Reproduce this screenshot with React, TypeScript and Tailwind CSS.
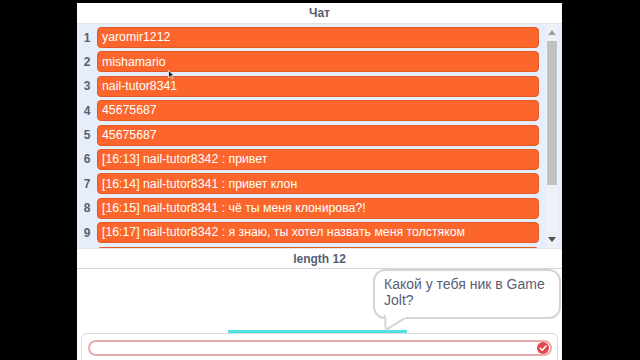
import React from 'react';

const items = [
  'yaromir1212',
  'mishamario',
  'nail-tutor8341',
  '45675687',
  '45675687',
  '[16:13] nail-tutor8342 : привет',
  '[16:14] nail-tutor8341 : привет клон',
  '[16:15] nail-tutor8341 : чё ты меня клонирова?!',
  '[16:17] nail-tutor8342 : я знаю, ты хотел назвать меня толстяком',
];

const ListRow: React.FC<{ index?: number; text?: string }> = ({ index, text }) => (
  <div className="flex items-center h-[21px] shrink-0">
    <div className="w-[20px] text-center text-[12px] font-bold text-[#575e75]">{index}</div>
    <div className="flex-1 h-full flex items-center bg-[#fc662c] rounded-[4px] border border-[#e25a25] px-[4px] text-[12.3px] text-white whitespace-nowrap overflow-hidden">
      {text}
    </div>
  </div>
);

export default function App() {
  return (
    <div
      className="w-[640px] h-[360px] bg-black pl-[77px] pt-[3px] overflow-hidden"
      style={{ fontFamily: '"Liberation Sans", Arial, sans-serif' }}
    >
      <div className="relative w-[485px] h-[357px] bg-white flex flex-col overflow-hidden">
        {/* list monitor */}
        <div className="shrink-0 flex flex-col h-[266px] border-b border-[#d3d6de]">
          <div className="h-[21px] shrink-0 flex items-center justify-center bg-white border-b border-[#dfe3ea] text-[12px] font-bold text-[#575e75]">
            Чат
          </div>
          <div className="flex-1 flex bg-[#e6eefb] overflow-hidden">
            <div className="flex-1 flex flex-col gap-[3.4px] pt-[3px] overflow-hidden">
              {items.map((t, i) => (
                <ListRow key={i} index={i + 1} text={t} />
              ))}
              {/* next row, scrolled out of view */}
              <ListRow />
            </div>
            <div className="w-[12px] ml-[7px] mr-[4px] flex flex-col items-center bg-[#eef1f5]">
              <div className="h-[17px] flex items-center justify-center">
                <svg width="8" height="5" viewBox="0 0 8 5">
                  <path d="M0 5 L4 0 L8 5 Z" fill="#a3a3a3" />
                </svg>
              </div>
              <div className="w-[10px] h-[144px] bg-[#c1c1c1]" />
              <div className="flex-1" />
              <div className="h-[17px] flex items-center justify-center">
                <svg width="8" height="5" viewBox="0 0 8 5">
                  <path d="M0 0 L8 0 L4 5 Z" fill="#505050" />
                </svg>
              </div>
            </div>
          </div>
          <div className="h-[20px] shrink-0 flex items-center justify-center bg-white border-t border-[#e3e6ec] text-[12px] font-bold text-[#575e75]">
            length 12
          </div>
        </div>

        {/* ask prompt */}
        <div className="shrink-0 mt-[64px] mx-[4px] h-[34px] border border-[#dcdcdc] rounded-[6px] pt-[6px] pl-[6px] pr-[5px]">
          <div className="h-[16px] rounded-full border-2 border-[#ecaaaa] flex items-center justify-end pr-[1px]">
            <svg width="12" height="12" viewBox="0 0 12 12">
              <circle cx="6" cy="6" r="6" fill="#e1474f" />
              <path d="M3.2 6.2 L5.2 8.2 L8.8 4.2" stroke="white" strokeWidth="1.6" fill="none" strokeLinecap="round" strokeLinejoin="round" />
            </svg>
          </div>
        </div>

        {/* sprite line */}
        <div className="absolute left-[151px] top-[327px] w-[179px] h-[3px] bg-[#4fe0e0]" />

        {/* speech bubble */}
        <div className="absolute left-[296px] top-[266px] w-[188px] h-[50px] bg-white border-2 border-[#d4d4d4] rounded-[12px] pl-[9px] pt-[5px] text-[14px] leading-[16px] text-[#575e75]">
          Какой у тебя ник в Game
          <br />
          Jolt?
        </div>
        <svg className="absolute left-[300px] top-[312px]" width="36" height="20" viewBox="0 0 36 20">
          <path d="M8 0 C10 6, 6 10, 10 15 C14 11, 22 7, 30 2" fill="white" stroke="#d4d4d4" strokeWidth="2" strokeLinejoin="round" />
          <rect x="9" y="0" width="20" height="3" fill="white" />
        </svg>

        {/* mouse cursor */}
        <svg className="absolute left-[91px] top-[67px]" width="7" height="10" viewBox="0 0 7 10">
          <path d="M0.5 0.5 L0.5 8 L2.5 6 L4 9 L5 8.5 L3.6 5.6 L6.3 5.6 Z" fill="#222" stroke="white" strokeWidth="0.7" />
        </svg>
      </div>
    </div>
  );
}
